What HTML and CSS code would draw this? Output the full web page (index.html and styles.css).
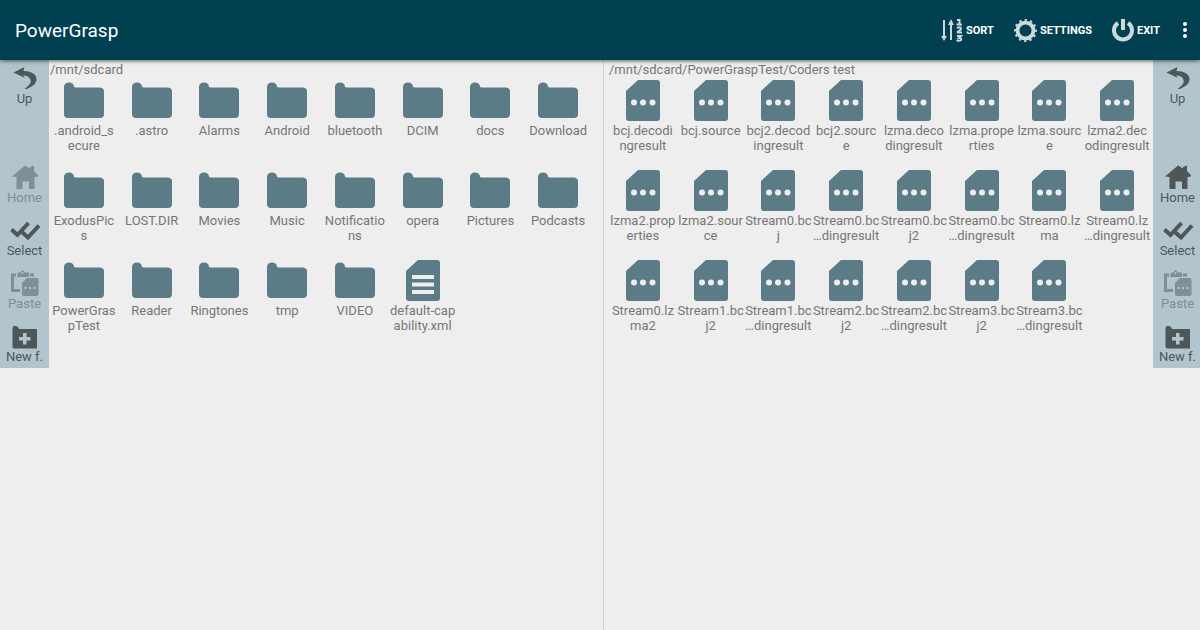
FILE: index.html
```html
<!DOCTYPE html>
<html lang="en">
<head>
<meta charset="utf-8">
<title>PowerGrasp</title>
<link rel="stylesheet" href="styles.css">
</head>
<body>
<svg class="defs" aria-hidden="true">
  <symbol id="folder" viewBox="0 0 40 42"><path d="M0 7C0 4 2 2.500 5 2.500S10 4 10 7L12 7.500H36Q40 8 40 11V34Q40 38 36 38H4Q0 38 0 34Z"/></symbol>
  <symbol id="file" viewBox="0 0 34 42"><path d="M12 0H31Q34 0 34 3V38Q34 41 31 41H3Q0 41 0 38V11Z"/><g class="mark"><circle cx="8" cy="22.500" r="3"/><circle cx="17" cy="22.500" r="3"/><circle cx="26.500" cy="22.500" r="3"/></g></symbol>
  <symbol id="text" viewBox="0 0 34 42"><path d="M12 0H31Q34 0 34 3V38Q34 41 31 41H3Q0 41 0 38V11Z"/><path class="mark" d="M6 15H28V19H6ZM6 22.500H28V26.500H6ZM6 30H28V34H6Z"/></symbol>
  <symbol id="up" viewBox="0 0 28 26"><path d="M2.500 7.500 13.500 2 12.500 6C20 6 25.500 9 25.500 14C25.500 19 21 21.500 16 24H13.500C18 20.500 20.500 18 19.500 15C18.500 11.500 15.500 10.500 12 10.500L14 13Z"/></symbol>
  <symbol id="home" viewBox="0 0 28 26"><path d="M14 1.500 19 4.500V3L23 1.500V7L27.500 12 25 13H23.500V25H18V17.500H11.500V25H5.500V13L1 12.500Z"/></symbol>
  <symbol id="select" viewBox="0 0 32 26"><path class="line" d="M2.500 12.500 8.500 18 19.500 6M13.500 15.500 19 20.500 30 8.500"/></symbol>
  <symbol id="paste" viewBox="0 0 30 26"><path class="thin" d="M10 20.500H2.500V5H6M20 5H24"/><path d="M8 2.500H10.500Q12.500-2 14.500 2.500H19V7H7Z"/><path d="M17 8H26.500Q28.500 8 28.500 10V24Q28.500 26 26.500 26H14Q12 26 12 24V13Z"/><g class="barmark"><circle cx="12.500" cy="3" r="1"/><circle cx="15.500" cy="18" r="1.200"/><circle cx="20" cy="18" r="1.200"/><circle cx="24.500" cy="18" r="1.200"/></g></symbol>
  <symbol id="newf" viewBox="0 0 28 26"><path d="M1.500 6C1.500 3.500 2.500 3 4.500 3S7.500 4 8 6H26V25.500H3.500Q1.500 25.500 1.500 23.500Z"/><path class="barmark" d="M12 10H15.500V14H19.500V17.500H15.500V21.500H12V17.500H8V14H12Z"/></symbol>
</svg>

<header class="header">
  <h1 class="title">PowerGrasp</h1>
  <nav class="actions">
    <button class="action" type="button">
      <svg width="22" height="24" viewBox="0 0 22 24"><path class="stroke" d="M3 2V20M10 22V5"/><path d="M0 18H6L3 23ZM7 7H13L10 1Z"/><path class="digit" d="M16 2H18.500V6M15.500 6.500H21M16 10Q20 8 20 11 19 13 16 14.500H21M16 18H20L18 20Q21 20 20 22 18 23.500 15.500 22"/></svg>
      <span>SORT</span>
    </button>
    <button class="action" type="button">
      <svg width="23" height="23" viewBox="0 0 24 24"><circle class="teeth" cx="12" cy="12" r="10.500" pathLength="144"/><circle class="ring" cx="12" cy="12" r="8.300"/></svg>
      <span>SETTINGS</span>
    </button>
    <button class="action" type="button">
      <svg width="22" height="24" viewBox="0 0 22 24"><path class="ring" d="M6 5A9 9 0 1 0 16 5"/><path class="ring" d="M11 1V12"/></svg>
      <span>EXIT</span>
    </button>
    <button class="more" type="button" aria-label="More options"><svg width="6" height="18" viewBox="0 0 6 18"><circle cx="3" cy="3" r="2"/><circle cx="3" cy="9" r="2"/><circle cx="3" cy="15" r="2"/></svg></button>
  </nav>
</header>

<main class="panes">
  <aside class="bar">
    <button class="tool up" type="button"><svg><use href="#up"/></svg>Up</button>
    <button class="tool" type="button" disabled><svg><use href="#home"/></svg>Home</button>
    <button class="tool" type="button"><svg class="wide"><use href="#select"/></svg>Select</button>
    <button class="tool" type="button" disabled><svg class="wide"><use href="#paste"/></svg>Paste</button>
    <button class="tool" type="button"><svg><use href="#newf"/></svg>New f.</button>
  </aside>

  <section class="pane left">
    <div class="path">/mnt/sdcard</div>
    <div class="grid">
      <div class="item"><svg><use href="#folder"/></svg><span>.android_s<br>ecure</span></div>
      <div class="item"><svg><use href="#folder"/></svg><span>.astro</span></div>
      <div class="item"><svg><use href="#folder"/></svg><span>Alarms</span></div>
      <div class="item"><svg><use href="#folder"/></svg><span>Android</span></div>
      <div class="item"><svg><use href="#folder"/></svg><span>bluetooth</span></div>
      <div class="item"><svg><use href="#folder"/></svg><span>DCIM</span></div>
      <div class="item"><svg><use href="#folder"/></svg><span>docs</span></div>
      <div class="item"><svg><use href="#folder"/></svg><span>Download</span></div>
      <div class="item"><svg><use href="#folder"/></svg><span>ExodusPic<br>s</span></div>
      <div class="item"><svg><use href="#folder"/></svg><span>LOST.DIR</span></div>
      <div class="item"><svg><use href="#folder"/></svg><span>Movies</span></div>
      <div class="item"><svg><use href="#folder"/></svg><span>Music</span></div>
      <div class="item"><svg><use href="#folder"/></svg><span>Notificatio<br>ns</span></div>
      <div class="item"><svg><use href="#folder"/></svg><span>opera</span></div>
      <div class="item"><svg><use href="#folder"/></svg><span>Pictures</span></div>
      <div class="item"><svg><use href="#folder"/></svg><span>Podcasts</span></div>
      <div class="item"><svg><use href="#folder"/></svg><span>PowerGras<br>pTest</span></div>
      <div class="item"><svg><use href="#folder"/></svg><span>Reader</span></div>
      <div class="item"><svg><use href="#folder"/></svg><span>Ringtones</span></div>
      <div class="item"><svg><use href="#folder"/></svg><span>tmp</span></div>
      <div class="item"><svg><use href="#folder"/></svg><span>VIDEO</span></div>
      <div class="item"><svg><use href="#text"/></svg><span>default-cap<br>ability.xml</span></div>
    </div>
  </section>

  <section class="pane right">
    <div class="path">/mnt/sdcard/PowerGraspTest/Coders test</div>
    <div class="grid">
      <div class="item"><svg><use href="#file"/></svg><span>bcj.decodi<br>ngresult</span></div>
      <div class="item"><svg><use href="#file"/></svg><span>bcj.source</span></div>
      <div class="item"><svg><use href="#file"/></svg><span>bcj2.decod<br>ingresult</span></div>
      <div class="item"><svg><use href="#file"/></svg><span>bcj2.sourc<br>e</span></div>
      <div class="item"><svg><use href="#file"/></svg><span>lzma.deco<br>dingresult</span></div>
      <div class="item"><svg><use href="#file"/></svg><span>lzma.prope<br>rties</span></div>
      <div class="item"><svg><use href="#file"/></svg><span>lzma.sourc<br>e</span></div>
      <div class="item"><svg><use href="#file"/></svg><span>lzma2.dec<br>odingresult</span></div>
      <div class="item"><svg><use href="#file"/></svg><span>lzma2.prop<br>erties</span></div>
      <div class="item"><svg><use href="#file"/></svg><span>lzma2.sour<br>ce</span></div>
      <div class="item"><svg><use href="#file"/></svg><span>Stream0.bc<br>j</span></div>
      <div class="item"><svg><use href="#file"/></svg><span>Stream0.bc<br>…dingresult</span></div>
      <div class="item"><svg><use href="#file"/></svg><span>Stream0.bc<br>j2</span></div>
      <div class="item"><svg><use href="#file"/></svg><span>Stream0.bc<br>…dingresult</span></div>
      <div class="item"><svg><use href="#file"/></svg><span>Stream0.lz<br>ma</span></div>
      <div class="item"><svg><use href="#file"/></svg><span>Stream0.lz<br>…dingresult</span></div>
      <div class="item"><svg><use href="#file"/></svg><span>Stream0.lz<br>ma2</span></div>
      <div class="item"><svg><use href="#file"/></svg><span>Stream1.bc<br>j2</span></div>
      <div class="item"><svg><use href="#file"/></svg><span>Stream1.bc<br>…dingresult</span></div>
      <div class="item"><svg><use href="#file"/></svg><span>Stream2.bc<br>j2</span></div>
      <div class="item"><svg><use href="#file"/></svg><span>Stream2.bc<br>…dingresult</span></div>
      <div class="item"><svg><use href="#file"/></svg><span>Stream3.bc<br>j2</span></div>
      <div class="item"><svg><use href="#file"/></svg><span>Stream3.bc<br>…dingresult</span></div>
    </div>
  </section>

  <aside class="bar end">
    <button class="tool up" type="button"><svg><use href="#up"/></svg>Up</button>
    <button class="tool" type="button"><svg><use href="#home"/></svg>Home</button>
    <button class="tool" type="button"><svg class="wide"><use href="#select"/></svg>Select</button>
    <button class="tool" type="button" disabled><svg class="wide"><use href="#paste"/></svg>Paste</button>
    <button class="tool" type="button"><svg><use href="#newf"/></svg>New f.</button>
  </aside>
</main>
</body>
</html>
```

FILE: styles.css
```css
* { box-sizing: border-box; }
body {
  margin: 0;
  min-height: 100vh;
  display: flex;
  flex-direction: column;
  background: #eee;
  color: #767676;
  font: 13px/15px Roboto, sans-serif;
}
button {
  margin: 0;
  padding: 0;
  border: 0;
  background: none;
  color: inherit;
  font: inherit;
}
.defs { position: absolute; width: 0; height: 0; }

.header {
  height: 60px;
  padding: 0 12px 0 15px;
  display: flex;
  align-items: center;
  justify-content: space-between;
  position: relative;
  background: #004050;
  box-shadow: 0 1px 4px rgba(0, 0, 0, 0.6);
  color: #fff;
}
.title { margin: 0; padding-top: 2px; font-size: 19px; line-height: 24px; font-weight: 400; }
.actions { display: flex; align-items: center; gap: 20px; }
.action {
  display: flex;
  align-items: center;
  gap: 3px;
  font-size: 11px;
  font-weight: 700;
}
.action svg { fill: #ccd9dc; }
.stroke, .digit, .ring, .teeth { fill: none; stroke: #ccd9dc; stroke-width: 2; }
.ring { stroke-width: 4; }
.teeth { stroke-width: 3; stroke-dasharray: 5 7; stroke-dashoffset: 2; }
.more { display: flex; margin-left: 2px; }
.more svg { fill: #fff; }

.panes { flex: 1; display: flex; align-items: stretch; }
.bar {
  flex: none;
  width: 49px;
  align-self: flex-start;
  display: flex;
  flex-direction: column;
  background: #b2c5cc;
  color: #4d5759;
}
.bar.end { width: 47px; padding-left: 2px; }
.tool {
  padding: 8px 0 4px;
  display: flex;
  flex-direction: column;
  align-items: center;
  white-space: nowrap;
}
.tool.up { padding-top: 5px; margin-bottom: 46px; }
.tool:disabled { color: #7f8f94; }
.tool svg { width: 28px; height: 26px; fill: currentColor; }
.tool svg.wide { width: 32px; }
.line { fill: none; stroke: currentColor; stroke-width: 4; }
.thin { fill: none; stroke: currentColor; stroke-width: 3; }
.barmark { fill: #b2c5cc; }

.pane { flex: 1; min-width: 0; padding-top: 2px; }
.left { padding-right: 11px; }
.right { padding-left: 4px; padding-right: 2px; border-left: 1px solid #d2d2d2; }
.path { padding-left: 1px; }
.grid {
  padding: 3px 0 0 1px;
  display: grid;
  grid-template-columns: repeat(8, minmax(0, 1fr));
}
.item {
  height: 90px;
  display: flex;
  flex-direction: column;
  align-items: center;
  text-align: center;
  white-space: nowrap;
}
.item svg { flex: none; width: 40px; height: 42px; margin-bottom: 1px; fill: #5b7c87; }
.mark { fill: #eee; }
```
